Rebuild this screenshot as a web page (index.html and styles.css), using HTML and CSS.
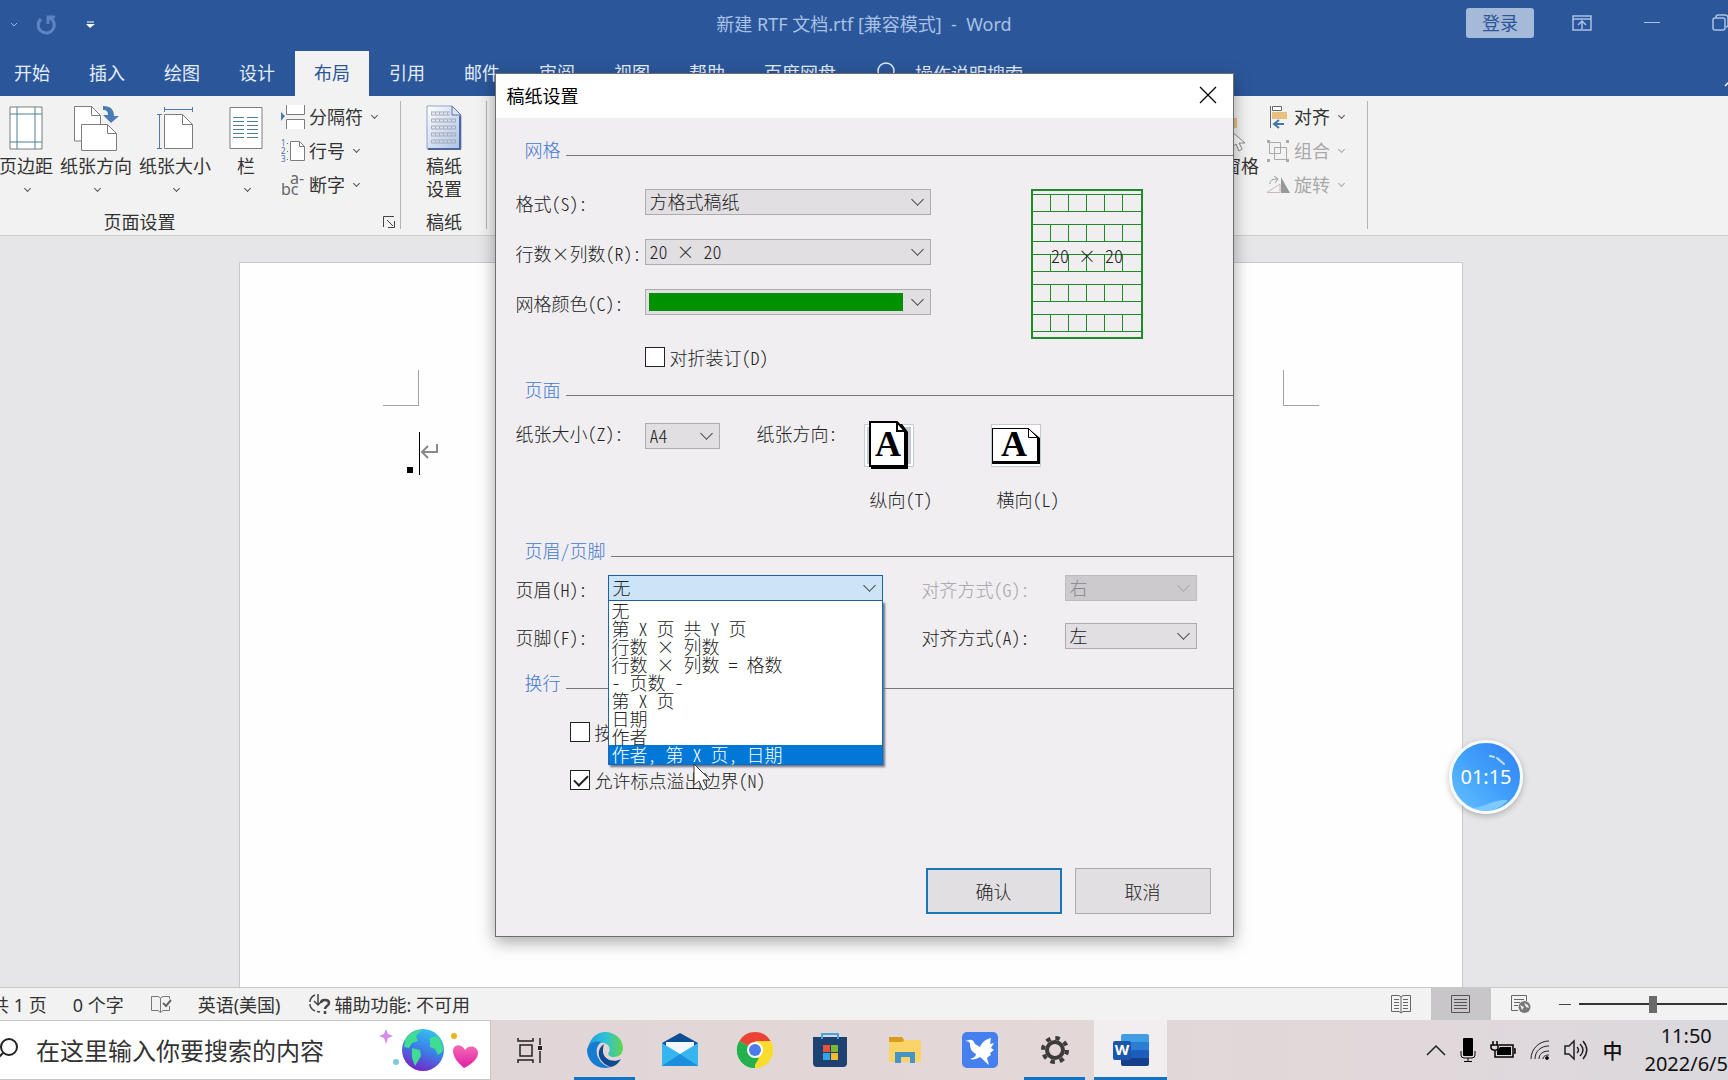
FILE: index.html
```html
<!DOCTYPE html>
<html lang="zh-CN">
<head>
    <meta charset="utf-8">
    <title>新建 RTF 文档.rtf - Word</title>
    <link rel="stylesheet" href="styles.css">
</head>
<body>
    <header class="titlebar">
        <div class="quick-access">
            <button aria-label="撤消"><svg width="8" height="6" viewBox="0 0 8 6"><path d="M1 1l3 3 3-3" fill="none" stroke="#9db7e0"/></svg></button>
            <button aria-label="重复"><svg width="20" height="20" viewBox="0 0 20 20"><path d="M5 4A8 8 0 1 0 14 3M12 9V2h7" fill="none" stroke="#5f83c0" stroke-width="3"/></svg></button>
            <button aria-label="自定义" class="customize"><svg width="9" height="8" viewBox="0 0 9 8"><path d="M1 1h7" stroke="#fff"/><path d="M0 3h9L4 7z" fill="#fff"/></svg></button>
        </div>
        <div class="doc-title">新建 RTF 文档.rtf [兼容模式]&nbsp; -&nbsp; Word</div>
        <div class="window-buttons">
            <button class="login">登录</button>
            <button aria-label="功能区选项"><svg width="20" height="16" viewBox="0 0 20 16" fill="none" stroke="#a9c1e6" stroke-width="1.5"><path d="M1 1h18v14H1zM1 4h18M10 14V7M6 10l4-4 4 4"/></svg></button>
            <button aria-label="最小化"><svg width="16" height="16" viewBox="0 0 16 16"><path d="M0 7.500h16" stroke="#a9c1e6"/></svg></button>
            <button aria-label="还原"><svg width="20" height="18" viewBox="0 0 20 18" fill="none" stroke="#a9c1e6" stroke-width="1.5"><rect x="1" y="4" width="12" height="12" rx="2"/><path d="M4 4V3a2 2 0 0 1 2-2h7a3 3 0 0 1 3 3v7a2 2 0 0 1-2 2"/></svg></button>
        </div>
    </header>

    <nav class="tabs">
        <a href="#">开始</a>
        <a href="#">插入</a>
        <a href="#">绘图</a>
        <a href="#">设计</a>
        <a href="#" class="active">布局</a>
        <a href="#">引用</a>
        <a href="#">邮件</a>
        <a href="#">审阅</a>
        <a href="#">视图</a>
        <a href="#">帮助</a>
        <a href="#">百度网盘</a>
        <a href="#" class="tell-me"><svg width="20" height="24" viewBox="0 0 20 24" fill="none" stroke="#e4edfa" stroke-width="1.5"><circle cx="11" cy="9" r="8"/><path d="M7 16l-4 7"/></svg>操作说明搜索</a>
        <button class="collapse" aria-label="折叠功能区"><svg width="12" height="8" viewBox="0 0 12 8"><path d="M1 7l5-5 5 5" fill="none" stroke="#fff" stroke-width="1.5"/></svg></button>
    </nav>

    <section class="ribbon">
        <div class="group group-page">
            <div class="group-items">
                <button class="big">
                    <svg width="36" height="46" viewBox="0 0 36 46"><path d="M2 2h32v42H2z" fill="#fff" stroke="#7d7d7d"/><path d="M9 2v42M27 2v42M2 9h32M2 37h32" stroke="#4f8197" fill="none"/></svg>
                    <span>页边距</span><i class="arrow"></i>
                </button>
                <button class="big">
                    <svg width="46" height="46" viewBox="0 0 46 46"><path d="M1.500 1.500h17l9 9V36h-26z" fill="#fff" stroke="#7d7d7d"/><path d="M18.500 1.500v9h9" fill="none" stroke="#7d7d7d"/><path d="M30 1c8 0 11 4 11 10h5l-8 7-8-8h5c0-3-1-5-5-5z" fill="#4a7bb5"/><path d="M8.500 19.500h26l9 9v17h-35z" fill="#fff" stroke="#7d7d7d"/><path d="M34.500 19.500v9h9" fill="none" stroke="#7d7d7d"/></svg>
                    <span>纸张方向</span><i class="arrow"></i>
                </button>
                <button class="big">
                    <svg width="38" height="46" viewBox="0 0 38 46"><path d="M8.500 9.500h18l10 10v24h-28z" fill="#fff" stroke="#7d7d7d"/><path d="M26.500 9.500v10h10" fill="none" stroke="#7d7d7d"/><path d="M8.500 2v5M36.500 2v5M8 4.500h28M1 9.500h5M1 43.500h5M3.500 10v33" fill="none" stroke="#4a7bb5"/></svg>
                    <span>纸张大小</span><i class="arrow"></i>
                </button>
                <button class="big">
                    <svg width="34" height="46" viewBox="0 0 34 46"><path d="M1 2.500h32v41H1z" fill="#fff" stroke="#7d7d7d"/><path d="M4 12.500h11M4 16.500h11M4 20.500h11M4 24.500h11M4 28.500h11M4 32.500h11M18 12.500h11M18 16.500h11M18 20.500h11M18 24.500h11M18 28.500h11M18 32.500h11" stroke="#4f8197"/></svg>
                    <span>栏</span><i class="arrow"></i>
                </button>
                <div class="small-list">
                    <button class="small"><svg width="24" height="24" viewBox="0 0 24 24"><path d="M0 7l4 4-4 5z" fill="#4a7bb5"/><path d="M5.500 0v9.500h18V0M5.500 24v-9.500h18V24" fill="#fff" stroke="#7d7d7d"/></svg>分隔符<i class="arrow"></i></button>
                    <button class="small"><svg width="24" height="24" viewBox="0 0 24 24"><path d="M9.500 2.500h9l5 5v14h-14z" fill="#fff" stroke="#7d7d7d"/><path d="M18.500 2.500v5h5" fill="none" stroke="#7d7d7d"/><text x="0" y="7" class="tiny">1</text><text x="0" y="15" class="tiny">2</text><text x="0" y="23" class="tiny">3</text><path d="M6 4.500h1M6 12.500h1M6 20.500h1" stroke="#4a7bb5"/></svg>行号<i class="arrow"></i></button>
                    <button class="small"><svg width="24" height="24" viewBox="0 0 24 24"><text x="0" y="22" class="hyphen">bc</text><text x="9" y="11" class="hyphen">a-</text></svg>断字<i class="arrow"></i></button>
                </div>
            </div>
            <div class="group-title">页面设置</div>
            <button class="launcher" aria-label="页面设置对话框"><svg width="12" height="12" viewBox="0 0 12 12" fill="none" stroke="#444"><path d="M.5 11V.5H11M4 4l6 6M11.500 5v6.500H5"/></svg></button>
        </div>
        <div class="group group-grid">
            <div class="group-items">
                <button class="big">
                    <svg width="36" height="46" viewBox="0 0 36 46"><defs><linearGradient id="sheet" x2="1" y2="1"><stop offset="0" stop-color="#fff"/><stop offset="1" stop-color="#a9bfe8"/></linearGradient></defs><path d="M1 1h25l9 9v34H1z" fill="url(#sheet)" stroke="#8da2cc"/><path d="M34 11v33H2" fill="none" stroke="#4d6798" stroke-width="2"/><path d="M26 1v9h9z" fill="#d9e4f7" stroke="#5c759f"/><path d="M5 7h19M5 10h19M5 14h25M5 17h25M5 21h25M5 24h25M5 28h25M5 31h25M5 35h25M5 38h25" stroke="#a5a9b2"/><path d="M5 8.500h19M5 15.500h25M5 22.500h25M5 29.500h25M5 36.500h25" stroke="#a5a9b2" stroke-width="2" stroke-dasharray="1 3"/></svg>
                    <span>稿纸</span><span>设置</span>
                </button>
            </div>
            <div class="group-title">稿纸</div>
        </div>
        <div class="group group-arrange">
            <div class="group-items">
                <button class="big">
                    <svg width="46" height="46" viewBox="0 0 46 46"><path d="M8 13h29v10H8z" fill="#e8c17e"/><path d="M31 26v17l5-4 3 7 3-2-3-6h6z" fill="#fff" stroke="#888"/></svg>
                    <span>选择窗格</span>
                </button>
                <div class="small-list">
                    <button class="small"><svg width="24" height="24" viewBox="0 0 24 24"><path d="M4.500 1v22" stroke="#666"/><path d="M6.500 1.500h9v4h-9z" fill="#fff" stroke="#666"/><path d="M6 7h15v7H6z" fill="#e8c17e"/><path d="M18 19H9m4-4l-5 4 5 4" fill="none" stroke="#3f78ad" stroke-width="2"/></svg>对齐<i class="arrow"></i></button>
                    <button class="small" disabled><svg width="24" height="24" viewBox="0 0 24 24" fill="none" stroke="#aaa"><path d="M3.500 3.500h11v11h-11zM8.500 8.500h12v12h-12z"/><path d="M1 1h3v3H1zM20 1h3v3h-3zM1 20h3v3H1zM20 20h3v3h-3z" fill="#aaa" stroke="none"/></svg>组合<i class="arrow"></i></button>
                    <button class="small" disabled><svg width="24" height="24" viewBox="0 0 24 24"><path d="M1 19.500h13V11z" fill="none" stroke="#c9b9b9"/><path d="M15 4v16h9z" fill="#999"/><path d="M4 11c0-4 3-5 7-5M8 3l4 3-3 4" fill="none" stroke="#999"/></svg>旋转<i class="arrow"></i></button>
                </div>
            </div>
        </div>
    </section>

    <main class="workspace">
        <div class="page">
            <div class="margin-marks"><span class="mark-left"></span><span class="mark-right"></span></div>
            <div class="paragraph">
                <span class="bullet"></span>
                <span class="caret"></span>
                <svg width="20" height="22" viewBox="0 0 20 22"><path d="M17 1v8H2M8 3L2 9l6 6" fill="none" stroke="#8a8a8a" stroke-width="2"/></svg>
            </div>
        </div>
    </main>

    <footer class="statusbar">
        <div class="status-left">
            <span>共 1 页</span>
            <span>0 个字</span>
            <svg width="22" height="20" viewBox="0 0 22 20" fill="none" stroke="#777"><path d="M10.500 4L8 2.500H1.500v14H8l2.500 2 2.500-2h6.500V12M10.500 4v14M10.500 4L13 2.500h6.500V5"/><path d="M13 9l3 3 5-6" stroke="#666" stroke-width="2"/></svg>
            <span>英语(美国)</span>
            <span class="access"><svg width="22" height="22" viewBox="0 0 22 22" fill="none" stroke="#444" stroke-width="1.500"><path d="M6 2C-1 5-1 15 6 18l5 1" stroke-dasharray="9 2"/><path d="M9 1v10M5 8l4 4 4-4"/><path d="M12 10c0-4 8-4 8 0 0 3-4 3-4 6M16 18v3" stroke-width="2.500"/></svg>辅助功能: 不可用</span>
        </div>
        <div class="status-right">
            <button class="view" aria-label="阅读视图"><svg width="20" height="20" viewBox="0 0 20 20" fill="none" stroke="#666"><path d="M10 3L8 1.500H.5v16H8l2 1.500 2-1.500h7.500v-16H12zM10 3v16M3 5.500h5M3 8.500h5M3 11.500h5M3 14.500h5M12 5.500h5M12 8.500h5M12 11.500h5M12 14.500h5"/></svg></button>
            <button class="view selected" aria-label="页面视图"><svg width="20" height="20" viewBox="0 0 20 20" fill="none" stroke="#555"><path d="M.5 1.500h18v17H.5zM3 5.500h13M3 8.500h13M3 11.500h13M3 14.500h13"/></svg></button>
            <button class="view" aria-label="Web 版式"><svg width="22" height="20" viewBox="0 0 22 20"><path d="M8 16.500H1.500v-15h15V7M4 5.500h10M4 8.500h6M4 11.500h4" fill="none" stroke="#666"/><circle cx="14.500" cy="13" r="6" fill="#777"/><path d="M10 11l4 2-2 3zM14 9l4 2 1 3-3-1z" fill="#eee"/></svg></button>
            <button class="minus" aria-label="缩小"></button>
            <input type="range" class="zoom" min="0" max="100" value="50" aria-label="显示比例">
        </div>
    </footer>

    <div class="taskbar">
        <div class="search">
            <svg width="24" height="30" viewBox="0 0 24 30" fill="none" stroke="#222" stroke-width="2"><circle cx="14" cy="12" r="8"/><path d="M8 18l-7 7"/></svg>
            <input type="text" aria-label="搜索" placeholder="在这里输入你要搜索的内容">
            <svg width="102" height="50" viewBox="0 0 102 50">
                <defs>
                    <linearGradient id="globe" x1=".7" y1="0" x2=".3" y2="1"><stop offset="0" stop-color="#35c3f0"/><stop offset=".5" stop-color="#3c7de6"/><stop offset="1" stop-color="#7a1fc9"/></linearGradient>
                    <linearGradient id="heart" x2="0" y2="1"><stop offset="0" stop-color="#f66bb4"/><stop offset="1" stop-color="#df1fa8"/></linearGradient>
                </defs>
                <path d="M8 4l2 5 5 2-5 2-2 6-2-6-5-2 5-2z" fill="#d58bea"/>
                <circle cx="18" cy="37" r="3" fill="#7ccbdc"/>
                <circle cx="76" cy="11" r="3" fill="#f0b41e"/>
                <circle cx="45" cy="25" r="21" fill="url(#globe)"/>
                <path d="M27 15c4-7 10-10 17-10l-6 6 2 5-6 2-3 5-5-1zM34 23l8 2 1 6-6 10-3-8zM52 13l7-2c4 5 6 9 6 15l-5 4-3-6-5-2z" fill="#3fdc92"/>
                <path d="M87 25c4-6 13-4 13 3 0 6-6 11-14 15-6-5-11-11-11-17 0-7 9-8 12-1z" fill="url(#heart)"/>
            </svg>
        </div>
        <div class="apps">
            <button aria-label="任务视图"><svg width="26" height="26" viewBox="0 0 26 26" fill="none" stroke="#222" stroke-width="1.500"><path d="M1 1v3h15V1M3 8h12v11H3zM1 26v-3h15v3M23 1v7M23 14v12"/><path d="M21 9h4v4h-4z" fill="#222" stroke="none"/></svg></button>
            <button aria-label="Edge" class="running"><svg width="36" height="36" viewBox="0 0 36 36"><defs><linearGradient id="e1" x2="1" y2="0"><stop offset="0" stop-color="#1c9de0"/><stop offset=".5" stop-color="#2fc0d8"/><stop offset="1" stop-color="#62d64c"/></linearGradient></defs><path d="M1 15C4 5 11 0 18 0c11 0 18 8 18 16 0 6-4 9-9 9-4 0-7-2-5-5 2-5-1-8-5-9C10 9 4 11 1 15z" fill="url(#e1)"/><path d="M0 18C1 11 8 8 15 10c-6 3-7 11-3 17 2 4 7 8 12 8C10 39 0 29 0 18z" fill="#167bd1"/><path d="M17 12c-9 6-6 19 7 23 4-1 8-4 10-8-7 4-17 1-18-7 0-3 0-5 1-8z" fill="#114a91"/></svg></button>
            <button aria-label="邮件"><svg width="36" height="36" viewBox="0 0 36 36"><path d="M0 11L18 1l18 10v4H0z" fill="#0d4f96"/><path d="M4 10h28v10L18 29 4 20z" fill="#f2f8fd"/><path d="M0 11l18 11 18-11v23H0z" fill="#36b5ee"/><path d="M0 34l18-12 18 12z" fill="#1b8fdb"/></svg></button>
            <button aria-label="Chrome"><svg width="36" height="36" viewBox="0 0 36 36"><path d="M18 18L2.400 9A18 18 0 0 1 33.600 9z" fill="#ea4335"/><path d="M18 18L33.600 9A18 18 0 0 1 18 36z" fill="#fbdc2c"/><path d="M18 18L18 36A18 18 0 0 1 2.400 9z" fill="#22b14c"/><path d="M18 9h15.600A18 18 0 0 1 18 36l8-13.500z" fill="#fbdc2c"/><path d="M2.400 9l8 13.500L22 26l-6 10A18 18 0 0 1 2.400 9z" fill="#22b14c"/><circle cx="18" cy="18" r="8" fill="#fff"/><circle cx="18" cy="18" r="6" fill="#4a7de8"/></svg></button>
            <button aria-label="应用商店"><svg width="36" height="36" viewBox="0 0 36 36"><path d="M10 7V2h16v5" fill="none" stroke="#48a4d8" stroke-width="2"/><path d="M1 5h34v26a4 4 0 0 1-4 4H5a4 4 0 0 1-4-4z" fill="#1d4272"/><path d="M10 7V4M26 7V4" stroke="#48a4d8" stroke-width="2"/><path d="M11 13h7v7h-7z" fill="#e8503a"/><path d="M19 13h7v7h-7z" fill="#7bb82f"/><path d="M11 21h7v7h-7z" fill="#35a3e4"/><path d="M19 21h7v7h-7z" fill="#f6b92c"/></svg></button>
            <button aria-label="文件资源管理器"><svg width="36" height="36" viewBox="0 0 36 36"><path d="M2 5h13l2 3v6H2z" fill="#d99d1c"/><path d="M2 10h13l3-2h16v22H2z" fill="#fbd367"/><path d="M8 31V20h20v11h-5v-6h-9v6z" fill="#4494c8"/></svg></button>
            <button aria-label="飞鸟"><svg width="36" height="36" viewBox="0 0 36 36"><rect width="36" height="36" rx="5" fill="#4580ee"/><path d="M3 9l4-1c3-1 5 1 6 4l5 3c2-5 6-8 11-9l-1 6 4-1-3 5 3 2-4 3 1 2c-2 1-3 2-4 3l2 7c-4-3-6-6-9-8-3 2-7 3-10 2 4-1 6-3 6-5-4-2-6-5-6-10 0-2-2-3-5-3z" fill="#fff"/></svg></button>
            <button aria-label="设置" class="running"><svg width="30" height="30" viewBox="0 0 30 30" fill="none" stroke="#3d3b3b"><circle cx="15" cy="15" r="8" stroke-width="4"/><circle cx="15" cy="15" r="12" stroke-width="4" stroke-dasharray="4.500 4.920"/></svg></button>
            <button aria-label="Word" class="running current"><svg width="36" height="34" viewBox="0 0 36 34"><path d="M8 3a2 2 0 0 1 2-2h24a2 2 0 0 1 2 2v7H8z" fill="#419fe1"/><path d="M8 9h28v8H8z" fill="#2b7cd3"/><path d="M8 17h28v8H8z" fill="#1c5dbd"/><path d="M8 25h28v6a2 2 0 0 1-2 2H10a2 2 0 0 1-2-2z" fill="#153e8b"/><rect y="8" width="18" height="19" rx="2" fill="#1b56ab"/><text x="9" y="22" class="word-letter">W</text></svg></button>
        </div>
        <div class="tray">
            <svg width="20" height="12" viewBox="0 0 20 12"><path d="M1 11l9-9 9 9" fill="none" stroke="#222" stroke-width="1.500"/></svg>
            <svg width="16" height="26" viewBox="0 0 16 26"><rect x="3" y="1" width="10" height="18" rx="1"/><path d="M1 14v4a3 3 0 0 0 3 3h8a3 3 0 0 0 3-3v-4M8 21v3M4 24.500h8" fill="none" stroke="#000"/></svg>
            <svg width="26" height="20" viewBox="0 0 26 20"><path d="M9 5h14v12H5v-6M24 9h1v4h-1M3 1v4M7 1v4M1 5h7v3c0 3-6 3-7 0zM5 10v3" fill="none" stroke="#000" stroke-width="1.500"/><path d="M10 7h11v8H7v-4z"/></svg>
            <svg width="20" height="20" viewBox="0 0 20 20" fill="none" stroke="#222"><path d="M1 19C1 9 9 1 19 1M5 19c0-8 6-13 14-13M9 19c0-5 4-8 10-8M13 19c0-3 3-4 6-4"/><circle cx="17" cy="18" r="1.500" fill="#000"/></svg>
            <svg width="24" height="22" viewBox="0 0 24 22" fill="none" stroke="#222" stroke-width="1.500"><path d="M1 7h4l5-5v18l-5-5H1zM13 8c2 2 2 4 0 6M16 5c4 4 4 8 0 12M19 2c5 6 5 12 0 18"/></svg>
            <span class="ime">中</span>
            <div class="clock">11:50<br>2022/6/5</div>
        </div>
    </div>

    <form class="dialog" role="dialog" aria-label="稿纸设置" onsubmit="return false">
        <div class="dialog-title">稿纸设置
            <button type="button" class="close" aria-label="关闭"><svg width="16" height="16" viewBox="0 0 16 16"><path d="M0 0l16 16M16 0L0 16" stroke="#000" stroke-width="1.200"/></svg></button>
        </div>
        <div class="dialog-body">
            <h2>网格</h2>
            <div class="grid-section">
                <div class="fields">
                    <label for="style">格式(S):</label>
                    <span class="combo"><select id="style"><option>方格式稿纸</option></select></span>
                    <label for="rows">行数×列数(R):</label>
                    <span class="combo"><select id="rows"><option>20 × 20</option></select></span>
                    <label for="color">网格颜色(C):</label>
                    <span class="combo"><select id="color" class="color"><option label=" "></option></select></span>
                    <label class="check"><input type="checkbox">对折装订(D)</label>
                </div>
                <svg class="preview" width="112" height="150" viewBox="0 0 112 150">
                    <g fill="none" stroke="#1f8a2a">
                        <rect x="1" y="1" width="110" height="148" stroke-width="2"/>
                        <path d="M2 5.500h108M2 22.500h108M2 35.500h108M2 52.500h108M2 65.500h108M2 82.500h108M2 95.500h108M2 112.500h108M2 125.500h108M2 142.500h108"/>
                        <path d="M19.500 5v17M37.500 5v17M55.500 5v17M73.500 5v17M91.500 5v17M19.500 35v17M37.500 35v17M55.500 35v17M73.500 35v17M91.500 35v17M19.500 65v17M37.500 65v17M55.500 65v17M73.500 65v17M91.500 65v17M19.500 95v17M37.500 95v17M55.500 95v17M73.500 95v17M91.500 95v17M19.500 125v17M37.500 125v17M55.500 125v17M73.500 125v17M91.500 125v17"/>
                    </g>
                    <text x="56" y="74">20 × 20</text>
                </svg>
            </div>

            <h2>页面</h2>
            <div class="paper-section">
                <label for="paper">纸张大小(Z):</label>
                <span class="combo"><select id="paper"><option>A4</option></select></span>
                <span class="direction">纸张方向:</span>
                <button type="button" class="orient">
                    <svg width="50" height="50" viewBox="0 0 50 50"><path d="M.5 3.500h49v42H.5z" fill="#fff" stroke="#c3cad2"/><path d="M3 6h44v37H3z" fill="#c3cad2"/><path d="M6 3h32l6 8v37H7z"/><path d="M6 1h27l8 9v35H6z" fill="#fff" stroke="#000" stroke-width="2"/><path d="M33 1v9h8" fill="none" stroke="#000" stroke-width="2"/><text x="24" y="35">A</text></svg>
                    <span>纵向(T)</span>
                </button>
                <button type="button" class="orient">
                    <svg width="50" height="50" viewBox="0 0 50 50"><path d="M.5 3.500h49v42H.5z" fill="#fff" stroke="#c3cad2"/><path d="M1 7h36l12 10v26H1z"/><path d="M1.500 7.500h36l9 9v24h-45z" fill="#fff" stroke="#000"/><path d="M37.500 7.500v9h9" fill="none" stroke="#000"/><text x="23" y="35">A</text></svg>
                    <span>横向(L)</span>
                </button>
            </div>

            <h2>页眉/页脚</h2>
            <div class="header-section">
                <label for="head">页眉(H):</label>
                <div class="combo open">
                    <select id="head"><option>无</option></select>
                    <ul class="options">
                        <li>无</li>
                        <li>第 X 页 共 Y 页</li>
                        <li>行数 × 列数</li>
                        <li>行数 × 列数 = 格数</li>
                        <li>- 页数 -</li>
                        <li>第 X 页</li>
                        <li>日期</li>
                        <li>作者</li>
                        <li class="hover">作者, 第 X 页, 日期</li>
                    </ul>
                </div>
                <label for="head-align" class="align off">对齐方式(G):</label>
                <span class="combo"><select id="head-align" disabled><option>右</option></select></span>
                <label for="foot">页脚(F):</label>
                <span class="combo"><select id="foot"><option></option></select></span>
                <label for="foot-align" class="align">对齐方式(A):</label>
                <span class="combo"><select id="foot-align"><option>左</option></select></span>
            </div>

            <h2>换行</h2>
            <div class="wrap-section">
                <label class="check"><input type="checkbox">按中文习惯控制首尾字符(U)</label>
                <label class="check"><input type="checkbox" checked>允许标点溢出边界(N)</label>
            </div>

            <div class="dialog-buttons">
                <button type="submit" class="ok">确认</button>
                <button type="button">取消</button>
            </div>
        </div>
    </form>

    <svg class="cursor" width="20" height="30" viewBox="0 0 20 30"><path d="M1 1v21l5-4 4 9 4-2-4-8h7z" fill="#fff" stroke="#333"/></svg>

    <div class="timer">01:15
        <svg width="68" height="68" viewBox="0 0 68 68"><path d="M38 13l4 1M45 15l7 6" stroke="#bfe2ff" stroke-width="2" stroke-linecap="round"/><path d="M20 65c12 0 20-9 36-8-9 11-24 13-36 8z" fill="#7cc8ff"/></svg>
    </div>
</body>
</html>
```

FILE: styles.css
```css
* {
    box-sizing: border-box;
    padding: 0;
    margin: 0;
}
body {
    display: flex;
    flex-direction: column;
    height: 100vh;
    overflow: hidden;
    position: relative;
    font-family: "Noto Sans", "Noto Sans CJK SC", sans-serif;
    font-size: 18px;
    color: #333;
    background-color: #e6e6e8;
}
button {
    font: inherit;
    color: inherit;
    background: none;
    border: none;
}
svg {
    display: block;
    flex: none;
    overflow: visible;
}
a {
    color: inherit;
    text-decoration: none;
}

/* title bar and tabs */
.titlebar {
    display: grid;
    grid-template-columns: 1fr auto 1fr;
    align-items: center;
    height: 46px;
    background-color: #2b579a;
    color: #a9c1e6;
}
.quick-access {
    display: flex;
    align-items: center;
    gap: 18px;
    padding-left: 10px;
    padding-top: 4px;
}
.customize {
    margin-left: 12px;
}
.doc-title {
    white-space: nowrap;
}
.window-buttons {
    display: flex;
    align-items: center;
    justify-content: flex-end;
    gap: 52px;
    margin-right: -4px;
}
.login {
    width: 68px;
    height: 30px;
    margin-right: -14px;
    border-radius: 3px;
    line-height: 30px;
    background-color: #a5b9d8;
    color: #2b579a;
}
.tabs {
    display: flex;
    gap: 1px;
    height: 50px;
    padding-top: 5px;
    padding-left: 1px;
    margin-left: -6px;
    background-color: #2b579a;
    color: #e4edfa;
}
.tabs a {
    padding: 0 19px;
    line-height: 44px;
    white-space: nowrap;
}
.tabs .active {
    background-color: #f3f2f3;
    color: #2b579a;
}
.tabs .tell-me {
    display: flex;
    align-items: center;
    gap: 20px;
}
.collapse {
    margin-left: auto;
    margin-right: -8px;
    margin-top: 18px;
}

/* ribbon */
.ribbon {
    display: flex;
    padding: 4px 0 0;
    border-bottom: 1px solid #cfcfcf;
    background-color: #f3f2f3;
    color: #333;
}
.group {
    position: relative;
    height: 135px;
}
.group::after {
    content: "";
    position: absolute;
    right: 0;
    top: 1px;
    bottom: 6px;
    width: 1px;
    background-color: #b5b5b5;
}
.group-items {
    display: flex;
    gap: 7px;
    height: 104px;
}
.group-title {
    margin-top: 6px;
    line-height: 24px;
    text-align: center;
}
.group-page {
    margin-left: -120px;
    padding-left: 119px;
    padding-right: 22px;
}
.group-page .group-title {
    margin-left: -119px;
    margin-right: -20px;
}
.group-grid {
    width: 86px;
}
.group-grid .group-items {
    justify-content: center;
}
.group-arrange {
    margin-left: auto;
    margin-right: 360px;
    padding-right: 22px;
}
.big {
    display: flex;
    flex-direction: column;
    align-items: center;
    min-width: 56px;
    padding-top: 5px;
    white-space: nowrap;
    line-height: 23px;
}
.big:first-child {
    min-width: 54px;
}
.big svg {
    margin-bottom: 4px;
}
.arrow {
    width: 5px;
    height: 5px;
    border: solid #555;
    border-width: 0 1px 1px 0;
    transform: rotate(45deg);
}
.big .arrow {
    margin-top: 8px;
    margin-left: 3px;
}
.small-list {
    margin-top: -1px;
}
.small {
    display: flex;
    align-items: center;
    gap: 4px;
    height: 34px;
    white-space: nowrap;
}
.small svg {
    margin-top: 2px;
}
.small .arrow {
    margin-left: 5px;
    margin-right: 2px;
    margin-bottom: 2px;
}
.small:disabled {
    color: #a9a9a9;
}
.small:disabled .arrow {
    border-color: #a9a9a9;
}
.tiny {
    font-size: 8px;
    fill: #4a6fa5;
}
.hyphen {
    font-size: 16px;
    fill: #666;
}
.launcher {
    position: absolute;
    right: 6px;
    bottom: 7px;
}

/* document */
.workspace {
    flex: 1;
    min-height: 0;
    padding: 26px 265px 0 239px;
}
.page {
    height: 100%;
    padding: 107px 143px 0;
    border: 1px solid #c9c9c9;
    border-bottom: none;
    background-color: #fefefe;
}
.margin-marks {
    display: flex;
    justify-content: space-between;
}
.margin-marks span {
    width: 36px;
    height: 36px;
    border-bottom: 1px solid #a3a3a3;
}
.mark-left {
    border-right: 1px solid #a3a3a3;
}
.mark-right {
    border-left: 1px solid #a3a3a3;
}
.paragraph {
    display: flex;
    align-items: center;
    height: 43px;
    margin-top: 26px;
    padding-left: 24px;
}
.bullet {
    width: 6px;
    height: 6px;
    margin-top: 32px;
    margin-right: 6px;
    background-color: #000;
}
.caret {
    width: 1px;
    height: 43px;
    background-color: #000;
}

/* status bar */
.statusbar {
    display: flex;
    justify-content: space-between;
    height: 33px;
    border-top: 1px solid #c9c9c9;
    background-color: #f3f2f2;
    white-space: nowrap;
}
.status-left {
    display: flex;
    align-items: center;
    gap: 26px;
    margin-left: -9px;
}
.access {
    display: flex;
    align-items: center;
    gap: 3px;
    margin-left: 3px;
}
.status-right {
    display: flex;
    align-items: center;
}
.view {
    display: flex;
    align-items: center;
    justify-content: center;
    width: 60px;
    height: 32px;
}
.view.selected {
    background-color: #c8c6c9;
}
.minus {
    width: 12px;
    height: 1px;
    margin: 0 8px;
    background-color: #444;
}
.zoom {
    -webkit-appearance: none;
    appearance: none;
    width: 148px;
    height: 18px;
    margin-right: 1px;
    background: linear-gradient(#333, #333) center / 100% 2px no-repeat;
}
.zoom::-webkit-slider-thumb {
    -webkit-appearance: none;
    width: 8px;
    height: 17px;
    background-color: #6a6a6a;
}

/* taskbar */
.taskbar {
    display: flex;
    height: 60px;
    background: linear-gradient(90deg, #dfd5d7, #e3d7d7 60%, #dfd8dc 90%, #dad9de);
}
.search {
    display: flex;
    align-items: center;
    width: 491px;
    border: 1px solid #c8c4c6;
    border-left: none;
    background-color: #fff;
}
.search > svg:first-child {
    margin-left: -5px;
}
.search input {
    flex: 1;
    min-width: 0;
    padding-left: 17px;
    border: none;
    outline: none;
    font-family: inherit;
    font-size: 24px;
    background: none;
}
.search input::placeholder {
    color: #333;
}
.search > svg:last-child {
    margin-right: 10px;
}
.apps {
    display: flex;
    margin-left: 1px;
}
.apps button {
    position: relative;
    display: flex;
    align-items: center;
    justify-content: center;
    width: 75px;
}
.running::after {
    content: "";
    position: absolute;
    left: 7px;
    right: 7px;
    bottom: 0;
    height: 3px;
    background-color: #1273c4;
}
.apps .current {
    width: 73px;
    margin-left: 2px;
    background-color: #f2eeef;
}
.current::after {
    left: 0;
    right: 0;
}
.word-letter {
    font-size: 15px;
    font-weight: bold;
    fill: #fff;
    text-anchor: middle;
}
.tray {
    display: flex;
    align-items: center;
    gap: 14px;
    margin-left: auto;
    color: #111;
}
.ime {
    font-size: 20px;
    font-weight: 500;
}
.clock {
    margin-left: 8px;
    font-size: 20px;
    line-height: 28px;
    text-align: center;
}

/* grid paper dialog */
.dialog {
    position: absolute;
    top: 73px;
    left: 0;
    right: 0;
    width: 739px;
    margin: 0 auto;
    border: 1px solid #6e6e72;
    background-color: #f0eef1;
    box-shadow: 0 5px 16px rgba(0, 0, 0, 0.35);
    color: #222;
}
.dialog-title {
    display: flex;
    align-items: center;
    justify-content: space-between;
    height: 44px;
    padding: 0 17px 2px 11px;
    background-color: #fff;
    color: #000;
}
.dialog-body {
    padding: 19px 0 22px;
    font-family: "Noto Sans CJK SC", sans-serif;
    font-weight: 300;
    font-feature-settings: "hwid";
}
h2 {
    display: flex;
    align-items: center;
    gap: 5px;
    padding-left: 29px;
    line-height: 24px;
    font-size: 18px;
    font-weight: 300;
    color: #3f78cf;
}
h2::after {
    content: "";
    flex: 1;
    height: 1px;
    margin-top: 12px;
    background-color: #77767a;
}
.combo {
    position: relative;
    display: block;
    height: 26px;
}
.combo::after {
    content: "";
    position: absolute;
    right: 9px;
    top: 6px;
    width: 8px;
    height: 8px;
    border: solid #444;
    border-width: 0 1px 1px 0;
    transform: rotate(45deg);
    pointer-events: none;
}
select {
    appearance: none;
    display: block;
    width: 100%;
    height: 26px;
    padding: 0 4px 2px;
    border: 1px solid #acacae;
    border-radius: 0;
    font: inherit;
    font-feature-settings: inherit;
    line-height: 22px;
    color: #222;
    background-color: #e1dfe2;
}
select:disabled {
    border-color: #bdbbbe;
    background-color: #cccacd;
    color: #888;
    opacity: 1;
}
.combo:has(select:disabled)::after {
    border-color: #aaa;
}
.color {
    padding: 3px 27px 3px 3px;
    background: linear-gradient(#009100, #009100) content-box no-repeat, #e1dfe2;
}
.grid-section {
    display: flex;
    justify-content: space-between;
    align-items: flex-start;
    padding: 28px 90px 0 20px;
}
.fields {
    display: grid;
    grid-template-columns: 129px 286px;
    grid-auto-rows: 26px;
    row-gap: 24px;
    line-height: 28px;
    white-space: nowrap;
}
.check {
    display: flex;
    align-items: center;
    gap: 5px;
}
.fields .check {
    grid-column: 2;
    margin-top: 10px;
}
.check input {
    appearance: none;
    width: 20px;
    height: 20px;
    border: 1px solid #222;
    background-color: #fff;
}
.check input:checked::after {
    content: "";
    display: block;
    width: 6px;
    height: 12px;
    margin: 1px 0 0 6px;
    border: solid #222;
    border-width: 0 2px 2px 0;
    transform: rotate(45deg);
}
.preview text {
    font-size: 18px;
    text-anchor: middle;
    fill: #222;
}
.grid-section + h2 {
    margin-top: 12px;
}
.paper-section {
    display: flex;
    align-items: flex-start;
    padding: 22px 0 0 20px;
    margin-bottom: 24px;
}
.paper-section label {
    width: 129px;
    line-height: 20px;
}
.paper-section .combo {
    width: 75px;
}
.direction {
    width: 107px;
    margin-left: 37px;
    line-height: 20px;
}
.orient {
    width: 127px;
    padding-bottom: 2px;
    text-align: left;
    font-weight: 300;
}
.orient span {
    display: block;
    padding-left: 6px;
}
.orient svg {
    margin-top: -2px;
    margin-bottom: 15px;
}
.orient text {
    font-family: "Liberation Serif", serif;
    font-size: 36px;
    font-weight: bold;
    text-anchor: middle;
}
.header-section {
    display: grid;
    grid-template-columns: 92px 275px 182px 132px;
    grid-auto-rows: 26px;
    row-gap: 22px;
    padding: 13px 0 0 20px;
    line-height: 28px;
    white-space: nowrap;
}
.align {
    margin-left: 39px;
}
.off {
    color: #a4a2a5;
}
.open {
    z-index: 1;
}
.open select {
    border-color: #1a5fa0;
    background-color: #cce4f8;
}
.options {
    position: absolute;
    top: 26px;
    left: 0;
    right: 0;
    border: 1px solid #1b68b0;
    border-top: none;
    background-color: #fff;
    box-shadow: 2px 2px 2px #64748f;
    list-style: none;
    line-height: 18px;
}
.options li {
    padding-left: 3px;
}
.options .hover {
    padding-bottom: 1px;
    background-color: #0078d7;
    color: #fff;
}
.header-section + h2 {
    margin-top: 21px;
}
.wrap-section {
    display: grid;
    gap: 20px;
    padding: 24px 0 0 74px;
    line-height: 28px;
}
.dialog-buttons {
    display: flex;
    justify-content: flex-end;
    gap: 13px;
    margin-top: 74px;
    padding-right: 22px;
}
.dialog-buttons button {
    width: 136px;
    height: 46px;
    border: 1px solid #acacae;
    background-color: #e1dfe2;
}
.dialog-buttons .ok {
    border: 2px solid #1a76b8;
}

/* floating things */
.cursor {
    position: absolute;
    left: 693px;
    top: 763px;
    z-index: 2;
}
.timer {
    position: absolute;
    right: 205px;
    top: 740px;
    width: 74px;
    height: 74px;
    border: 3px solid #f5fbff;
    border-radius: 50%;
    background: linear-gradient(225deg, #2f80f5, #41a0fb 50%, #66c1ff);
    box-shadow: 0 2px 6px rgba(0, 0, 0, 0.25);
    font-size: 20px;
    line-height: 68px;
    text-align: center;
    color: #fff;
}
.timer svg {
    position: absolute;
    inset: 0;
}
```
